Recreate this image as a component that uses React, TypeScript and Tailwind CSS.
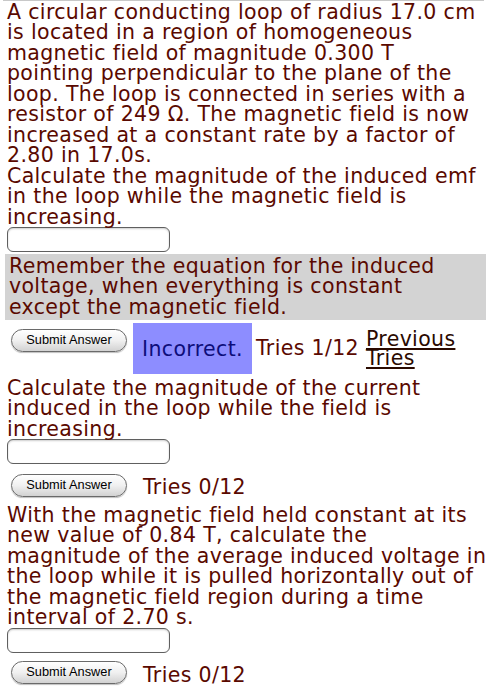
import React from "react";

const textFont = { fontFamily: '"DejaVu Sans", Verdana, sans-serif' };

function Lines({ lines }: { lines: string[] }) {
  return (
    <p className="whitespace-nowrap text-[20.5px] leading-[20.45px] tracking-[0.35px]">
      {lines.map((l, i) => (
        <React.Fragment key={i}>
          {l}
          {i < lines.length - 1 && <br />}
        </React.Fragment>
      ))}
    </p>
  );
}

function SubmitButton() {
  return (
    <button
      className="h-[23px] w-[116px] rounded-full border border-[#6a6a6a] bg-gradient-to-b from-[#ffffff] via-[#f0f0f0] to-[#d2d2d2] text-[12.8px] leading-none text-black shadow-[0_1px_1px_rgba(0,0,0,0.25)]"
      style={{ fontFamily: '"Liberation Sans", Arial, sans-serif' }}
    >
      Submit Answer
    </button>
  );
}

function AnswerInput() {
  return (
    <div className="h-[25px] w-[163px] rounded-[6px] border-[1.5px] border-[#5f5f5f] bg-white shadow-[inset_0_1px_2px_rgba(0,0,0,0.2)]" />
  );
}

export default function App() {
  return (
    <div className="w-[491px] h-[689px] bg-white overflow-hidden text-[#5a0900]" style={textFont}>
      <div className="mx-[3px] w-[481px] border-t-[1.5px] border-[#c8c8c8]" />
      <div className="px-[7px]">
        <div className="pt-[1px]">
          <Lines
            lines={[
              "A circular conducting loop of radius 17.0 cm",
              "is located in a region of homogeneous",
              "magnetic field of magnitude 0.300 T",
              "pointing perpendicular to the plane of the",
              "loop. The loop is connected in series with a",
              "resistor of 249 Ω. The magnetic field is now",
              "increased at a constant rate by a factor of",
              "2.80 in 17.0s.",
              "Calculate the magnitude of the induced emf",
              "in the loop while the magnetic field is",
              "increasing.",
            ]}
          />
        </div>
        <AnswerInput />
      </div>
      <div className="mx-[5px] mt-[2px] w-[481px] h-[66px] bg-[#d3d3d3] px-[4px] pt-[2px]">
        <Lines
          lines={[
            "Remember the equation for the induced",
            "voltage, when everything is constant",
            "except the magnetic field.",
          ]}
        />
      </div>
      <div className="flex items-start pl-[11px] mt-[3px] h-[51px]">
        <div className="pt-[4px]">
          <SubmitButton />
        </div>
        <div className="ml-[6px] w-[119px] h-[51px] bg-[#8d8dff] flex items-center justify-center pt-[2px]">
          <span className="text-[20.5px] tracking-[0.35px] text-[#0d0d7a]">Incorrect.</span>
        </div>
        <div className="ml-[4px] pt-[15px] whitespace-nowrap text-[20.5px] leading-[20.45px] tracking-[0.35px]">Tries 1/12</div>
        <a
          href="#"
          className="ml-[7px] pt-[7px] text-[20.5px] leading-[19px] tracking-[0.35px] underline text-[#2a0a00] w-[95px]"
        >
          Previous
          <br />
          Tries
        </a>
      </div>
      <div className="px-[7px] mt-[4px]">
        <Lines
          lines={[
            "Calculate the magnitude of the current",
            "induced in the loop while the field is",
            "increasing.",
          ]}
        />
        <AnswerInput />
      </div>
      <div className="flex items-center pl-[11px] mt-[9px]">
        <SubmitButton />
        <span className="ml-[16px] whitespace-nowrap text-[20.5px] leading-[20.45px] tracking-[0.35px] pt-[4px]">Tries 0/12</span>
      </div>
      <div className="px-[7px] mt-[7px]">
        <Lines
          lines={[
            "With the magnetic field held constant at its",
            "new value of 0.84 T, calculate the",
            "magnitude of the average induced voltage in",
            "the loop while it is pulled horizontally out of",
            "the magnetic field region during a time",
            "interval of 2.70 s.",
          ]}
        />
        <AnswerInput />
      </div>
      <div className="flex items-center pl-[11px] mt-[8px]">
        <SubmitButton />
        <span className="ml-[16px] whitespace-nowrap text-[20.5px] leading-[20.45px] tracking-[0.35px] pt-[4px]">Tries 0/12</span>
      </div>
    </div>
  );
}
